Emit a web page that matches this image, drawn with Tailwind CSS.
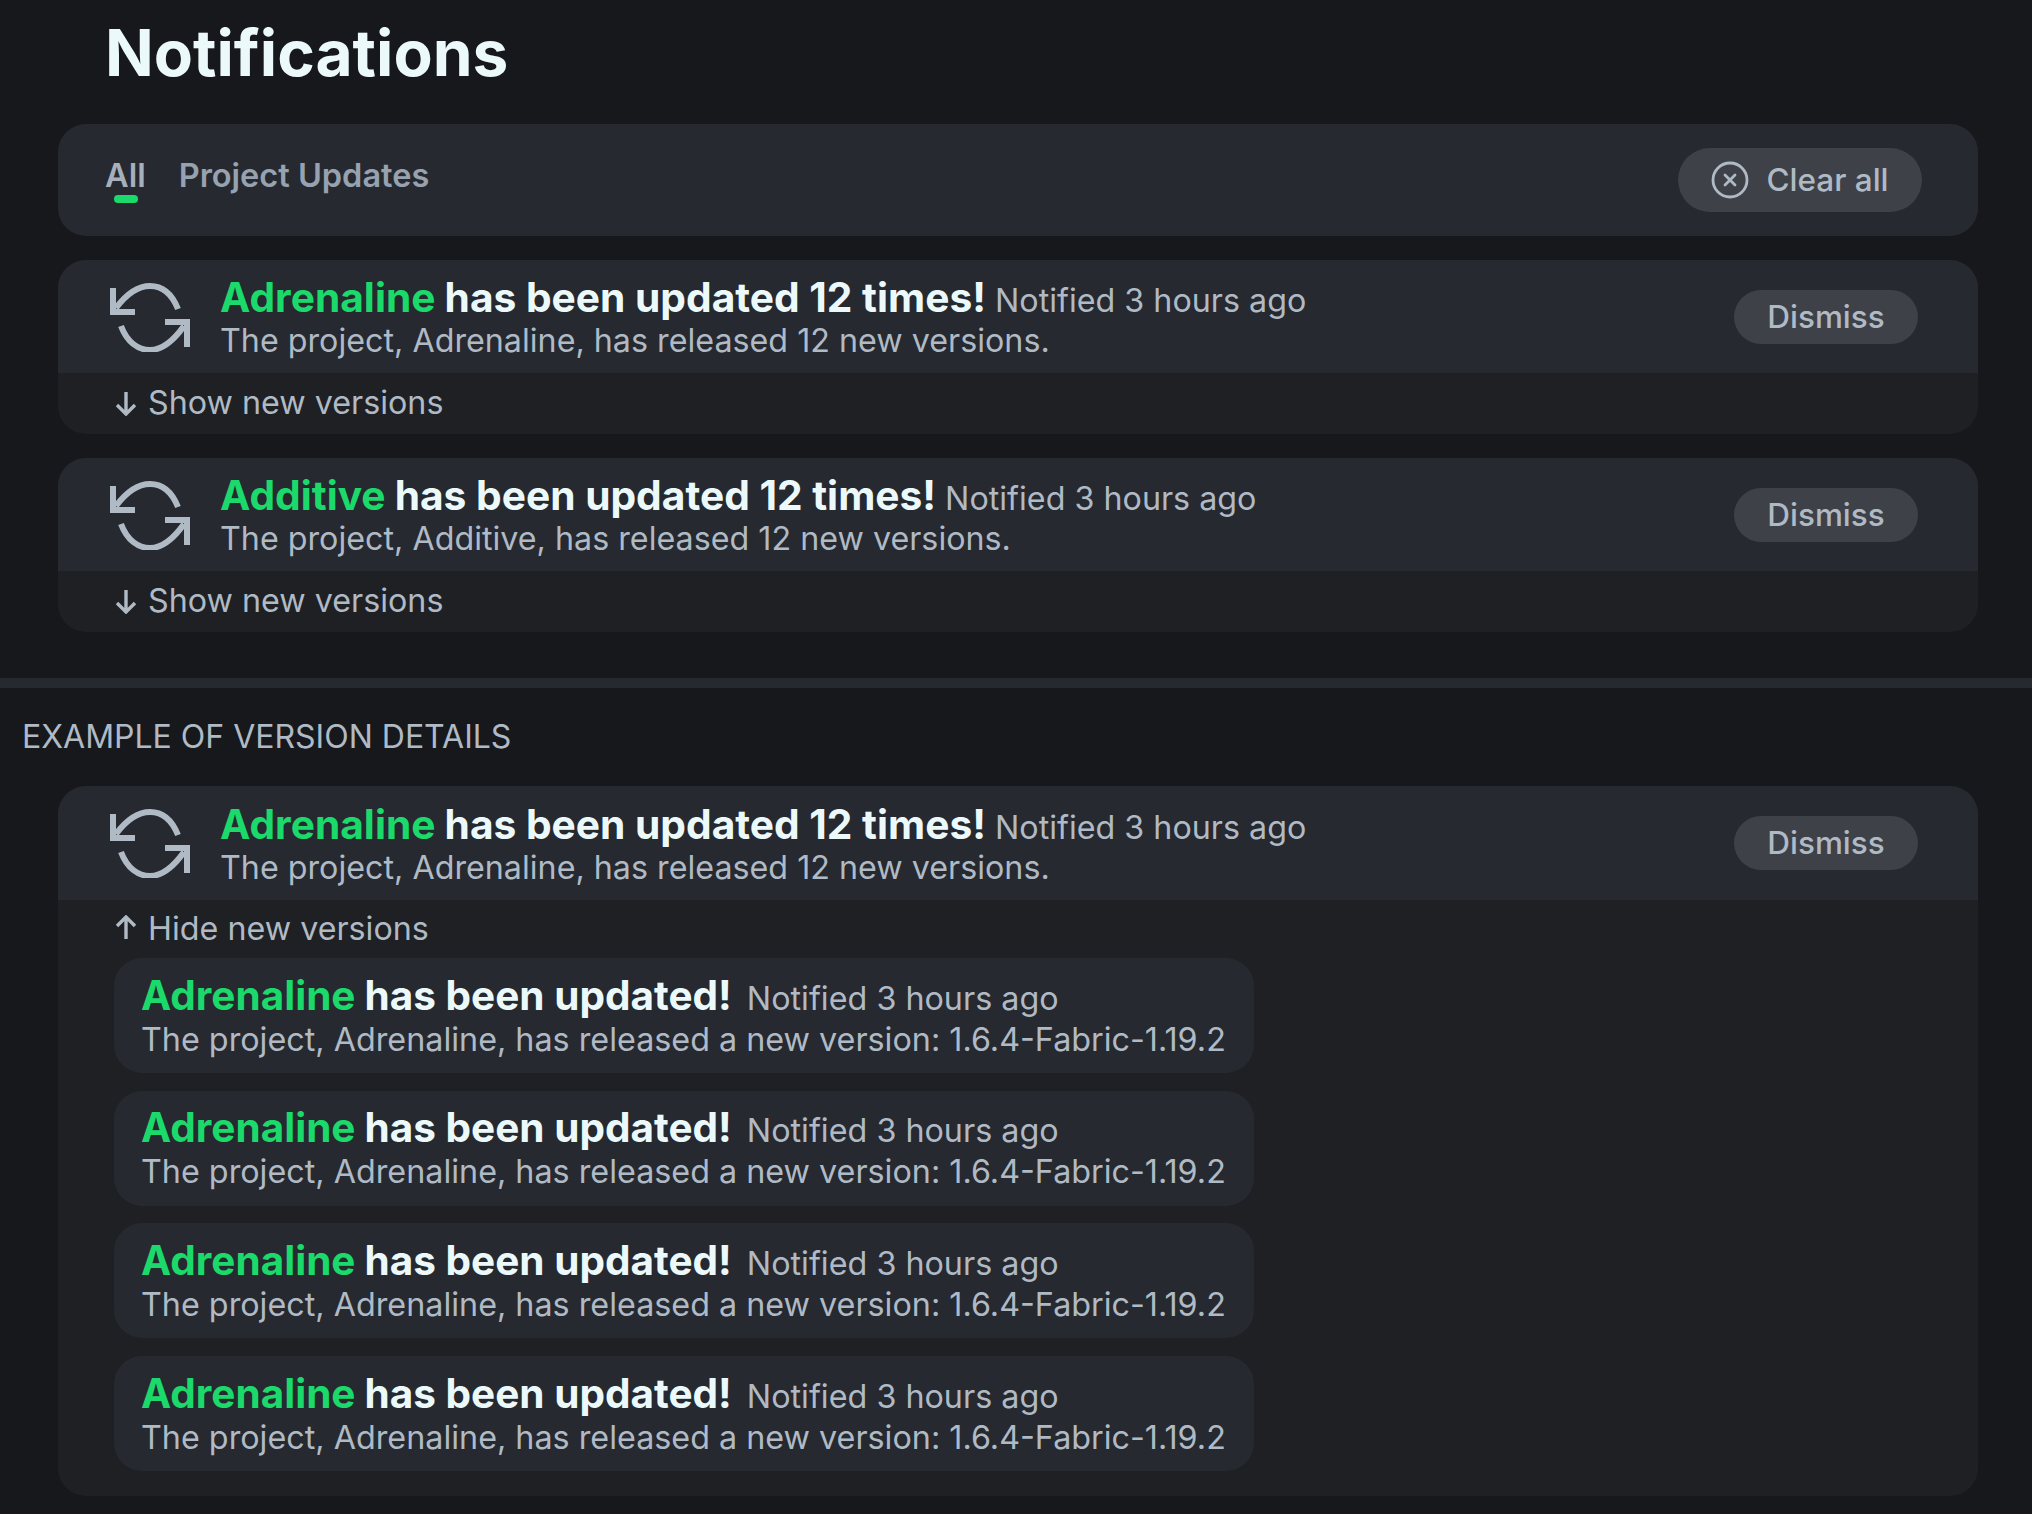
<!DOCTYPE html>
<html lang="en">
<head>
  <meta charset="UTF-8">
  <title>Notifications</title>
  <script src="https://cdn.jsdelivr.net/npm/@tailwindcss/browser@4"></script>
</head>
<body class="bg-[#16181c] font-['Inter',sans-serif] text-[#b0bac5] min-h-screen overflow-hidden">
  <!-- Header -->
  <h1 class="h-[124px] pl-[105px] pb-[18px] flex items-center text-[64px] leading-none font-bold text-[#ecf9fb]">Notifications</h1>

  <div class="ml-[58px] mr-[54px] flex flex-col gap-[24px]">
    <!-- Filter bar -->
    <div class="h-[112px] bg-[#26292f] rounded-[28px] pl-[47px] pr-[56px] flex items-center justify-between">
      <div class="flex gap-[33px] text-[32.5px] leading-none font-semibold text-[#96a2b0] -mt-[8px]">
        <span class="relative text-[#a6b0bd]">All
          <span class="absolute left-[9px] top-[35px] w-[24px] h-[8px] rounded-full bg-[#1bd96a]"></span>
        </span>
        <span>Project Updates</span>
      </div>
      <button class="h-[64px] w-[244px] rounded-full bg-[#3e4148] flex items-center justify-center gap-[17px] text-[31.5px] font-medium text-[#b0bac5]">
        <svg class="w-[38px] h-[38px]" viewBox="0 0 38 38" fill="none" stroke="#b0bac5" stroke-width="2.8" stroke-linecap="round">
          <circle cx="19" cy="19" r="17"/>
          <path d="M14 14l10 10M24 14l-10 10"/>
        </svg>
        Clear all
      </button>
    </div>

    <!-- Adrenaline -->
    <div class="bg-[#1e2024] rounded-[28px] overflow-hidden">
      <div class="h-[113px] bg-[#26292f] pl-[50px] pr-[60px] flex items-center">
        <svg class="w-[84px] h-[70px] shrink-0" viewBox="18 12 84 70" fill="none" stroke="#b0bac5" stroke-width="6">
          <path d="M23 18V42H45M26 38C38 22 50 16 60 16C72 16 82 24 88 39"/>
          <path d="M97 77V52H75M94 56C84 70 72 80 60 80C48 80 37 72 31 56"/>
        </svg>
        <div class="ml-[28px] flex-1 pb-[2px]">
          <div class="text-[32.25px] leading-[48px]"><span class="text-[40.7px] font-bold text-[#1bd96a]">Adrenaline</span> <span class="text-[40.7px] font-bold text-[#ecf9fb]">has been updated 12 times!</span> Notified 3 hours ago</div>
          <div class="text-[32.25px] leading-[32px]">The project, Adrenaline, has released 12 new versions.</div>
        </div>
        <button class="h-[54px] w-[184px] rounded-full bg-[#3e4148] text-[31.5px] font-medium">Dismiss</button>
      </div>
      <div class="h-[61px] pl-[56px] flex items-center gap-[10px] text-[32.25px]">
        <svg class="w-[24px] h-[26px] -mt-[2px]" viewBox="0 0 24 26" fill="none" stroke="#b0bac5" stroke-width="3.4"><path d="M12 2V23M3 15l9 9 9-9"/></svg>
        Show new versions
      </div>
    </div>

    <!-- Additive -->
    <div class="bg-[#1e2024] rounded-[28px] overflow-hidden">
      <div class="h-[113px] bg-[#26292f] pl-[50px] pr-[60px] flex items-center">
        <svg class="w-[84px] h-[70px] shrink-0" viewBox="18 12 84 70" fill="none" stroke="#b0bac5" stroke-width="6">
          <path d="M23 18V42H45M26 38C38 22 50 16 60 16C72 16 82 24 88 39"/>
          <path d="M97 77V52H75M94 56C84 70 72 80 60 80C48 80 37 72 31 56"/>
        </svg>
        <div class="ml-[28px] flex-1 pb-[2px]">
          <div class="text-[32.25px] leading-[48px]"><span class="text-[40.7px] font-bold text-[#1bd96a]">Additive</span> <span class="text-[40.7px] font-bold text-[#ecf9fb]">has been updated 12 times!</span> Notified 3 hours ago</div>
          <div class="text-[32.25px] leading-[32px]">The project, Additive, has released 12 new versions.</div>
        </div>
        <button class="h-[54px] w-[184px] rounded-full bg-[#3e4148] text-[31.5px] font-medium">Dismiss</button>
      </div>
      <div class="h-[61px] pl-[56px] flex items-center gap-[10px] text-[32.25px]">
        <svg class="w-[24px] h-[26px] -mt-[2px]" viewBox="0 0 24 26" fill="none" stroke="#b0bac5" stroke-width="3.4"><path d="M12 2V23M3 15l9 9 9-9"/></svg>
        Show new versions
      </div>
    </div>
  </div>

  <!-- Divider -->
  <div class="mt-[46px] h-[10px] bg-[#26292f]"></div>
  <div class="h-[98px] pl-[22px] flex items-center text-[32px]">EXAMPLE OF VERSION DETAILS</div>

  <!-- Expanded example -->
  <div class="ml-[58px] mr-[54px] h-[710px] bg-[#1e2024] rounded-[28px] overflow-hidden">
    <div class="h-[114px] bg-[#26292f] pl-[50px] pr-[60px] flex items-center">
      <svg class="w-[84px] h-[70px] shrink-0" viewBox="18 12 84 70" fill="none" stroke="#b0bac5" stroke-width="6">
        <path d="M23 18V42H45M26 38C38 22 50 16 60 16C72 16 82 24 88 39"/>
        <path d="M97 77V52H75M94 56C84 70 72 80 60 80C48 80 37 72 31 56"/>
      </svg>
      <div class="ml-[28px] flex-1 pb-[2px]">
        <div class="text-[32.25px] leading-[48px]"><span class="text-[40.7px] font-bold text-[#1bd96a]">Adrenaline</span> <span class="text-[40.7px] font-bold text-[#ecf9fb]">has been updated 12 times!</span> Notified 3 hours ago</div>
        <div class="text-[32.25px] leading-[32px]">The project, Adrenaline, has released 12 new versions.</div>
      </div>
      <button class="h-[54px] w-[184px] rounded-full bg-[#3e4148] text-[31.5px] font-medium">Dismiss</button>
    </div>
    <div class="h-[58px] pl-[56px] flex items-center gap-[10px] text-[32.25px]">
      <svg class="w-[24px] h-[26px] -mt-[2px]" viewBox="0 0 24 26" fill="none" stroke="#b0bac5" stroke-width="3.4"><path d="M12 24V3M3 11l9-9 9 9"/></svg>
      Hide new versions
    </div>
    <div class="pl-[56px] flex flex-col gap-[17.7px]">
      <div class="w-fit h-[115px] bg-[#26292f] rounded-[28px] pl-[27px] pr-[28px] pt-[1px] flex flex-col justify-center">
        <div class="text-[32.3px] leading-[44px]"><span class="text-[40.5px] font-bold text-[#1bd96a]">Adrenaline</span> <span class="text-[40.5px] font-bold text-[#ecf9fb]">has been updated!</span> <span class="ml-[6px]">Notified 3 hours ago</span></div>
        <div class="text-[32.3px] leading-[38px]">The project, Adrenaline, has released a new version: 1.6.4-Fabric-1.19.2</div>
      </div>
      <div class="w-fit h-[115px] bg-[#26292f] rounded-[28px] pl-[27px] pr-[28px] pt-[1px] flex flex-col justify-center">
        <div class="text-[32.3px] leading-[44px]"><span class="text-[40.5px] font-bold text-[#1bd96a]">Adrenaline</span> <span class="text-[40.5px] font-bold text-[#ecf9fb]">has been updated!</span> <span class="ml-[6px]">Notified 3 hours ago</span></div>
        <div class="text-[32.3px] leading-[38px]">The project, Adrenaline, has released a new version: 1.6.4-Fabric-1.19.2</div>
      </div>
      <div class="w-fit h-[115px] bg-[#26292f] rounded-[28px] pl-[27px] pr-[28px] pt-[1px] flex flex-col justify-center">
        <div class="text-[32.3px] leading-[44px]"><span class="text-[40.5px] font-bold text-[#1bd96a]">Adrenaline</span> <span class="text-[40.5px] font-bold text-[#ecf9fb]">has been updated!</span> <span class="ml-[6px]">Notified 3 hours ago</span></div>
        <div class="text-[32.3px] leading-[38px]">The project, Adrenaline, has released a new version: 1.6.4-Fabric-1.19.2</div>
      </div>
      <div class="w-fit h-[115px] bg-[#26292f] rounded-[28px] pl-[27px] pr-[28px] pt-[1px] flex flex-col justify-center">
        <div class="text-[32.3px] leading-[44px]"><span class="text-[40.5px] font-bold text-[#1bd96a]">Adrenaline</span> <span class="text-[40.5px] font-bold text-[#ecf9fb]">has been updated!</span> <span class="ml-[6px]">Notified 3 hours ago</span></div>
        <div class="text-[32.3px] leading-[38px]">The project, Adrenaline, has released a new version: 1.6.4-Fabric-1.19.2</div>
      </div>
    </div>
  </div>
</body>
</html>
